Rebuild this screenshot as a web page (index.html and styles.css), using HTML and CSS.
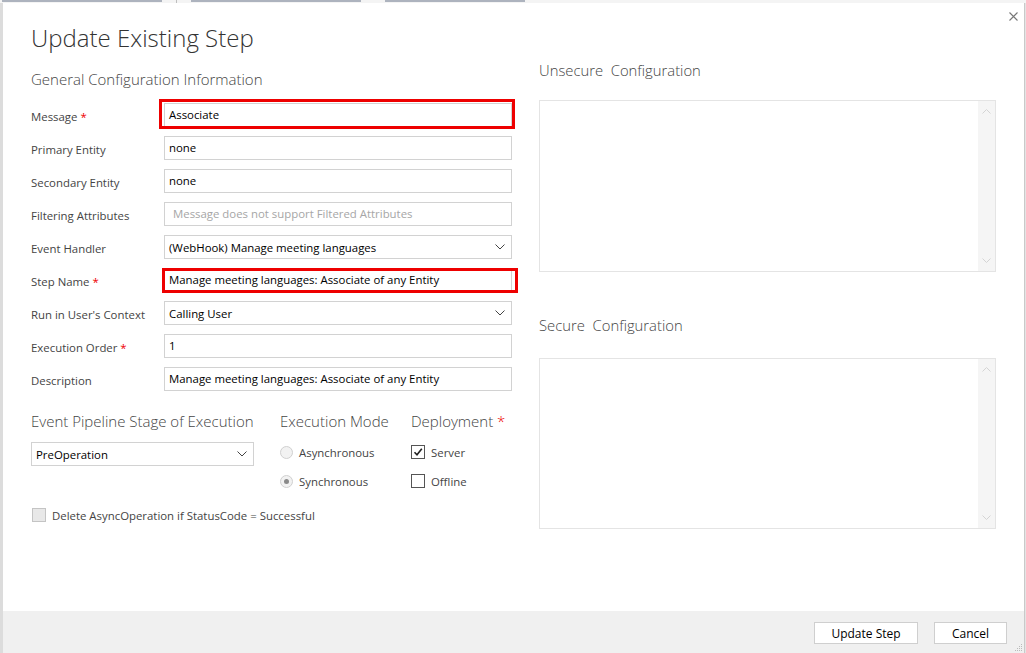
FILE: index.html
```html
<!DOCTYPE html>
<html lang="en">
<head>
    <meta charset="UTF-8">
    <title>Update Existing Step</title>
    <link rel="stylesheet" href="styles.css">
</head>
<body>
    <div class="backdrop-top">
        <i class="t1"></i><i class="sep"></i><i class="t2"></i><i class="t3"></i>
    </div>
    <div class="wrap">
        <div class="backdrop-left"></div>
        <div class="dialog">
            <button class="close" title="Close">
                <svg width="9" height="9" viewBox="0 0 9 9"><path d="M0.5 0.5L8.5 8.5M8.5 0.5L0.5 8.5" stroke="#777" stroke-width="1.1" fill="none"/></svg>
            </button>

            <div class="content">
                <div class="left">
                    <h1>Update Existing Step</h1>
                    <h2>General Configuration Information</h2>

                    <div class="form">
                        <div class="row">
                            <label>Message <span class="req">*</span></label>
                            <div class="field marked">Associate<span class="mark"></span></div>
                        </div>
                        <div class="row">
                            <label>Primary Entity</label>
                            <div class="field">none</div>
                        </div>
                        <div class="row">
                            <label>Secondary Entity</label>
                            <div class="field">none</div>
                        </div>
                        <div class="row">
                            <label>Filtering Attributes</label>
                            <div class="field placeholder">Message does not support Filtered Attributes</div>
                        </div>
                        <div class="row">
                            <label>Event Handler</label>
                            <div class="field select">(WebHook) Manage meeting languages
                                <svg class="chev" width="10" height="6" viewBox="0 0 10 6"><path d="M0.5 0.5L5 5L9.5 0.5" stroke="#444" fill="none"/></svg>
                            </div>
                        </div>
                        <div class="row">
                            <label>Step Name <span class="req">*</span></label>
                            <div class="field marked">Manage meeting languages: Associate of any Entity<span class="mark mark-wide"></span></div>
                        </div>
                        <div class="row">
                            <label>Run in User's Context</label>
                            <div class="field select">Calling User
                                <svg class="chev" width="10" height="6" viewBox="0 0 10 6"><path d="M0.5 0.5L5 5L9.5 0.5" stroke="#444" fill="none"/></svg>
                            </div>
                        </div>
                        <div class="row">
                            <label>Execution Order <span class="req">*</span></label>
                            <div class="field">1</div>
                        </div>
                        <div class="row">
                            <label>Description</label>
                            <div class="field">Manage meeting languages: Associate of any Entity</div>
                        </div>
                    </div>

                    <div class="stage">
                        <div class="stage-col">
                            <h3>Event Pipeline Stage of Execution</h3>
                            <div class="field select">PreOperation
                                <svg class="chev" width="10" height="6" viewBox="0 0 10 6"><path d="M0.5 0.5L5 5L9.5 0.5" stroke="#444" fill="none"/></svg>
                            </div>
                        </div>
                        <div class="stage-col">
                            <h3>Execution Mode</h3>
                            <div class="opt"><span class="radio"></span>Asynchronous</div>
                            <div class="opt"><span class="radio on"></span>Synchronous</div>
                        </div>
                        <div class="stage-col">
                            <h3>Deployment <span class="req">*</span></h3>
                            <div class="opt"><span class="check">
                                <svg width="12" height="12" viewBox="0 0 12 12"><path d="M2.5 6.2L5 8.8L9.8 2.8" stroke="#222" stroke-width="1.6" fill="none"/></svg>
                            </span>Server</div>
                            <div class="opt"><span class="check"></span>Offline</div>
                        </div>
                    </div>

                    <div class="opt delete"><span class="check disabled"></span>Delete AsyncOperation if StatusCode = Successful</div>
                </div>

                <div class="right">
                    <h3 class="cfg">Unsecure&nbsp; Configuration</h3>
                    <div class="area">
                        <div class="area-body"></div>
                        <div class="area-scroll">
                            <svg width="9" height="5" viewBox="0 0 9 5"><path d="M0.5 4.5L4.5 0.5L8.5 4.5" stroke="#d4d4d4" fill="none"/></svg>
                            <svg width="9" height="5" viewBox="0 0 9 5"><path d="M0.5 0.5L4.5 4.5L8.5 0.5" stroke="#d4d4d4" fill="none"/></svg>
                        </div>
                    </div>
                    <h3 class="cfg secure">Secure&nbsp; Configuration</h3>
                    <div class="area">
                        <div class="area-body"></div>
                        <div class="area-scroll">
                            <svg width="9" height="5" viewBox="0 0 9 5"><path d="M0.5 4.5L4.5 0.5L8.5 4.5" stroke="#d4d4d4" fill="none"/></svg>
                            <svg width="9" height="5" viewBox="0 0 9 5"><path d="M0.5 0.5L4.5 4.5L8.5 0.5" stroke="#d4d4d4" fill="none"/></svg>
                        </div>
                    </div>
                </div>
            </div>

            <div class="footer">
                <button class="btn btn-update">Update Step</button>
                <button class="btn btn-cancel">Cancel</button>
                <svg class="grip" width="8" height="8" viewBox="0 0 8 8" fill="#bbb">
                    <rect x="6" y="0" width="1" height="1"/><rect x="4" y="2" width="1" height="1"/><rect x="6" y="2" width="1" height="1"/>
                    <rect x="2" y="4" width="1" height="1"/><rect x="4" y="4" width="1" height="1"/><rect x="6" y="4" width="1" height="1"/>
                    <rect x="0" y="6" width="1" height="1"/><rect x="2" y="6" width="1" height="1"/><rect x="4" y="6" width="1" height="1"/><rect x="6" y="6" width="1" height="1"/>
                </svg>
            </div>
        </div>
    </div>
</body>
</html>
```

FILE: styles.css
```css
body {
    margin: 0;
    font-family: "Segoe UI", "Open Sans", sans-serif;
    background: #e4e4e4;
    color: #444;
    overflow: hidden;
}
/* page behind the dialog, only a sliver shows */
.backdrop-top {
    height: 3px;
    background: #f4f4f4;
    display: flex;
    align-items: flex-start;
}
.backdrop-top i {
    height: 2px;
    background: #7d879a;
    opacity: 0.6;
}
.backdrop-top .t1 {
    width: 160px;
    margin-left: 2px;
}
.backdrop-top .sep {
    width: 1px;
    height: 3px;
    margin: 0 14px;
    background: #999;
}
.backdrop-top .t2 {
    width: 170px;
}
.backdrop-top .t3 {
    width: 140px;
    margin-left: 24px;
}
.wrap {
    display: flex;
    height: 650px;
}
.backdrop-left {
    width: 3px;
    background: #dcdcdc;
}
.dialog {
    position: relative;
    width: 1021px;
    border-right: 1px solid #c9c9c9;
    background: #fff;
    display: flex;
    flex-direction: column;
}
.close {
    position: absolute;
    top: 9px;
    right: 6px;
    border: 0;
    background: none;
    padding: 0;
    width: 9px;
    height: 9px;
    display: flex;
}
.content {
    flex: 1;
    display: flex;
    gap: 27px;
    padding: 0 28px;
}
.left {
    width: 481px;
}
.right {
    width: 457px;
    padding-top: 57px;
}
h1 {
    margin: 19px 0 0;
    font-size: 24px;
    font-weight: 300;
    line-height: 32px;
    color: #333;
}
h2, h3 {
    margin: 0;
    font-size: 15px;
    font-weight: 300;
    line-height: 20px;
    color: #444;
}
h2 {
    margin-top: 15px;
}
.form {
    margin-top: 14px;
    display: flex;
    flex-direction: column;
    gap: 9px;
}
.row {
    display: flex;
    align-items: center;
}
.row label {
    width: 133px;
    font-size: 11.4px;
    padding-top: 2px;
}
.req {
    color: #e00;
}
.field {
    position: relative;
    flex: 1;
    box-sizing: border-box;
    height: 24px;
    border: 1px solid #d2d2d2;
    padding: 0 4px;
    font-size: 11.4px;
    color: #000;
    line-height: 21px;
    white-space: nowrap;
}
.placeholder {
    color: #a6a6a6;
    padding-left: 8px;
}
.select {
    display: flex;
    justify-content: space-between;
    align-items: center;
}
.chev {
    margin-right: 2px;
}
.mark {
    position: absolute;
    left: -6px;
    top: -5px;
    right: -4px;
    bottom: -3px;
    border: 3px solid #e00;
}
.mark-wide {
    left: -3px;
    top: -1px;
    right: -7px;
    bottom: -2px;
}
.stage {
    display: grid;
    grid-template-columns: 223px 105px 1fr;
    gap: 26px;
    margin-top: 20px;
}
.stage-col {
    display: flex;
    flex-direction: column;
    gap: 5px;
}
.stage-col h3 {
    margin-bottom: 6px;
    white-space: nowrap;
}
.stage-col .field {
    flex: none;
}
.stage-col h3 + .opt {
    margin-top: -2px;
}
.opt {
    display: flex;
    align-items: center;
    height: 24px;
    font-size: 11.4px;
    color: #444;
    white-space: nowrap;
}
.radio {
    box-sizing: border-box;
    width: 13px;
    height: 13px;
    border-radius: 50%;
    border: 1px solid #d0d0d0;
    background: #f2f2f2;
    margin: 0 6px 0 0;
    display: flex;
    align-items: center;
    justify-content: center;
}
.radio.on::after {
    content: "";
    width: 5px;
    height: 5px;
    border-radius: 50%;
    background: #8a8a8a;
}
.check {
    box-sizing: border-box;
    width: 14px;
    height: 14px;
    border: 1px solid #555;
    background: #fff;
    margin-right: 6px;
    display: flex;
    align-items: center;
    justify-content: center;
}
.check.disabled {
    border-color: #c4c4c4;
    background: #e8e8e8;
}
.delete {
    margin-top: 10px;
    margin-left: 1px;
}
.cfg {
    font-size: 14.8px;
}
.secure {
    margin-top: 43px;
}
.area {
    display: flex;
    box-sizing: border-box;
    height: 172px;
    border: 1px solid #e4e4e4;
    margin-top: 20px;
}
.secure + .area {
    margin-top: 23px;
    height: 171px;
}
.area-body {
    flex: 1;
}
.area-scroll {
    width: 17px;
    background: #f5f5f5;
    display: flex;
    flex-direction: column;
    justify-content: space-between;
    align-items: center;
    padding: 8px 0;
}
.footer {
    position: relative;
    height: 42px;
    background: #f0f0f0;
    display: flex;
    justify-content: flex-end;
    align-items: flex-start;
    gap: 16px;
    padding: 11px 17px 0 0;
    box-sizing: border-box;
}
.btn {
    height: 22px;
    border: 1px solid #cfcfcf;
    background: #fff;
    font-family: inherit;
    font-size: 12px;
    color: #000;
    padding: 0;
}
.btn-update {
    width: 104px;
}
.btn-cancel {
    width: 73px;
}
.grip {
    position: absolute;
    right: 1px;
    bottom: 1px;
}
```
